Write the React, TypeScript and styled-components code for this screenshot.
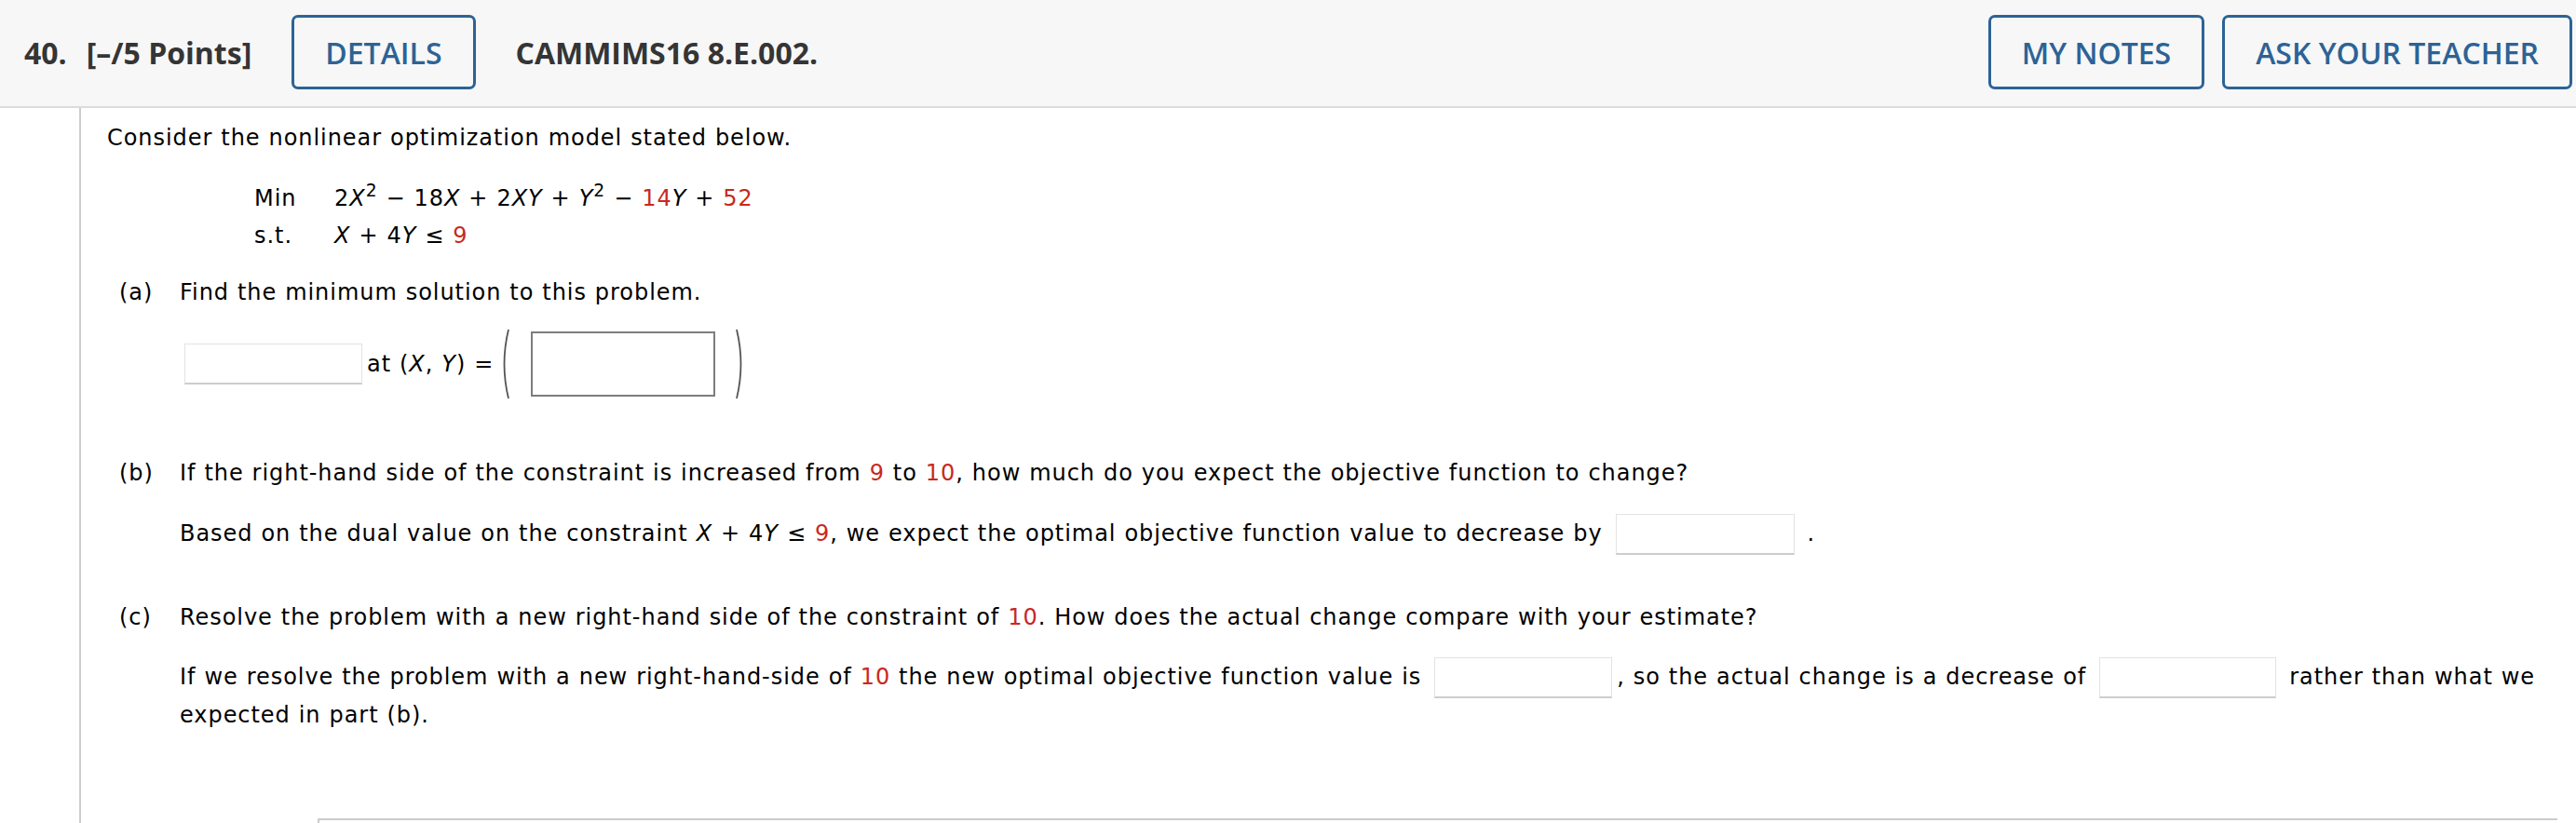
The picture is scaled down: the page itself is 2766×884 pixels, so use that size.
import React from 'react';
import styled, { createGlobalStyle } from 'styled-components';

const Global = createGlobalStyle`
  html, body { margin: 0; padding: 0; background: #ffffff; }
  body { width: 2766px; height: 884px; overflow: hidden; }
`;

const Page = styled.div`
  display: flex;
  flex-direction: column;
  width: 2766px;
  height: 884px;
  overflow: hidden;
  font-family: "DejaVu Sans", Verdana, sans-serif;
  color: #000;
`;

const Header = styled.header`
  display: flex;
  flex: none;
  align-items: center;
  box-sizing: border-box;
  height: 116px;
  padding: 0 4px 2px 26px;
  background: #f7f7f7;
  border-bottom: 2px solid #dcdcdc;
  font-family: "Open Sans", sans-serif;
`;

const HeadText = styled.span<{ $gap?: number }>`
  font-size: 32px;
  font-weight: 700;
  color: #353535;
  margin-right: ${(p) => p.$gap ?? 0}px;
  white-space: nowrap;
`;

const HeadButton = styled.button<{ $push?: boolean }>`
  box-sizing: border-box;
  height: 80px;
  padding: 0 33px;
  margin-left: ${(p) => (p.$push ? 'auto' : '0')};
  margin-right: ${(p) => (p.$push ? '19px' : '43px')};
  border: 3px solid #2c6396;
  border-radius: 7px;
  background: transparent;
  color: #2c6396;
  font-family: "Open Sans", sans-serif;
  font-size: 32px;
  font-weight: 600;
  white-space: nowrap;
  &:last-child { margin-right: 0; }
`;

const Body = styled.div`
  display: flex;
  flex: 1;
  min-height: 0;
`;

const Gutter = styled.div`
  width: 85px;
  flex: none;
  border-right: 2px solid #cccccc;
`;

const Content = styled.main`
  flex: 1;
  padding: 12px 20px 0 28px;
  font-size: 24px;
  line-height: 40px;
  letter-spacing: 0.95px;
  word-spacing: 0.4px;
`;

const Intro = styled.p`
  margin: 0;
`;

const Model = styled.div`
  display: grid;
  grid-template-columns: 86px auto;
  justify-content: start;
  margin: 25px 0 0 158px;
`;

const Var = styled.i`
  font-style: italic;
`;

const Sup = styled.sup`
  font-size: 0.78em;
  line-height: 0;
  vertical-align: 0.52em;
`;

const Red = styled.span`
  color: #c8291d;
`;

const PartHead = styled.div<{ $top: number }>`
  display: flex;
  margin: ${(p) => p.$top}px 0 0 13px;
`;

const PartLabel = styled.span`
  width: 65px;
  flex: none;
`;

const AnswerRow = styled.div<{ $top: number }>`
  display: flex;
  align-items: center;
  margin: ${(p) => p.$top}px 0 0 78px;
`;

const AnswerText = styled.div<{ $top: number }>`
  margin: ${(p) => p.$top}px 0 0 78px;
`;

const Blank = styled.span<{ $w: number }>`
  display: inline-block;
  box-sizing: border-box;
  width: ${(p) => p.$w}px;
  height: 44px;
  margin: -2px 5px;
  vertical-align: middle;
  border: 1px solid #e3e3e3;
  border-bottom: 2px solid #cdcdcd;
  background: #fff;
`;

const VectorBox = styled.span`
  display: block;
  flex: none;
  box-sizing: border-box;
  width: 198px;
  height: 70px;
  border: 2px solid #7d7d7d;
  background: #fff;
`;

const Paren = styled.svg<{ $ml: number; $mr: number }>`
  flex: none;
  width: 12px;
  height: 78px;
  margin: 0 ${(p) => p.$mr}px 0 ${(p) => p.$ml}px;
`;

const Footer = styled.div`
  margin: 91px 0 0 226px;
  height: 40px;
  border-top: 2px solid #cccccc;
  border-left: 2px solid #cccccc;
`;

const LeftParen = () => (
  <Paren $ml={6} $mr={22} viewBox="0 0 12 78">
    <path d="M10 2 Q1 39 10 76" fill="none" stroke="#555" strokeWidth="1.8" />
  </Paren>
);

const RightParen = () => (
  <Paren $ml={21} $mr={0} viewBox="0 0 12 78">
    <path d="M2 2 Q11 39 2 76" fill="none" stroke="#555" strokeWidth="1.8" />
  </Paren>
);

export default function App() {
  return (
    <>
      <Global />
      <Page>
        <Header>
          <HeadText $gap={21}>40.</HeadText>
          <HeadText $gap={43}>[–/5 Points]</HeadText>
          <HeadButton>DETAILS</HeadButton>
          <HeadText>CAMMIMS16 8.E.002.</HeadText>
          <HeadButton $push>MY NOTES</HeadButton>
          <HeadButton>ASK YOUR TEACHER</HeadButton>
        </Header>
        <Body>
          <Gutter />
          <Content>
            <Intro>Consider the nonlinear optimization model stated below.</Intro>
            <Model>
              <span>Min</span>
              <span>
                2<Var>X</Var>
                <Sup>2</Sup> − 18<Var>X</Var> + 2<Var>XY</Var> + <Var>Y</Var>
                <Sup>2</Sup> − <Red>14</Red>
                <Var>Y</Var> + <Red>52</Red>
              </span>
              <span>s.t.</span>
              <span>
                <Var>X</Var> + 4<Var>Y</Var> ≤ <Red>9</Red>
              </span>
            </Model>

            <PartHead $top={21}>
              <PartLabel>(a)</PartLabel>
              <span>Find the minimum solution to this problem.</span>
            </PartHead>
            <AnswerRow $top={18}>
              <Blank $w={191} role="textbox" />
              <span>
                at (<Var>X</Var>, <Var>Y</Var>) =
              </span>
              <LeftParen />
              <VectorBox role="textbox" />
              <RightParen />
            </AnswerRow>

            <PartHead $top={58}>
              <PartLabel>(b)</PartLabel>
              <span>
                If the right-hand side of the constraint is increased from <Red>9</Red> to <Red>10</Red>, how much do
                you expect the objective function to change?
              </span>
            </PartHead>
            <AnswerText $top={25}>
              Based on the dual value on the constraint <Var>X</Var> + 4<Var>Y</Var> ≤ <Red>9</Red>, we expect the
              optimal objective function value to decrease by <Blank $w={192} role="textbox" /> .
            </AnswerText>

            <PartHead $top={49}>
              <PartLabel>(c)</PartLabel>
              <span>
                Resolve the problem with a new right-hand side of the constraint of <Red>10</Red>. How does the actual
                change compare with your estimate?
              </span>
            </PartHead>
            <AnswerText $top={24}>
              If we resolve the problem with a new right-hand-side of <Red>10</Red> the new optimal objective function
              value is <Blank $w={191} role="textbox" />, so the actual change is a decrease of{' '}
              <Blank $w={190} role="textbox" /> rather than what we expected in part (b).
            </AnswerText>

            <Footer />
          </Content>
        </Body>
      </Page>
    </>
  );
}
